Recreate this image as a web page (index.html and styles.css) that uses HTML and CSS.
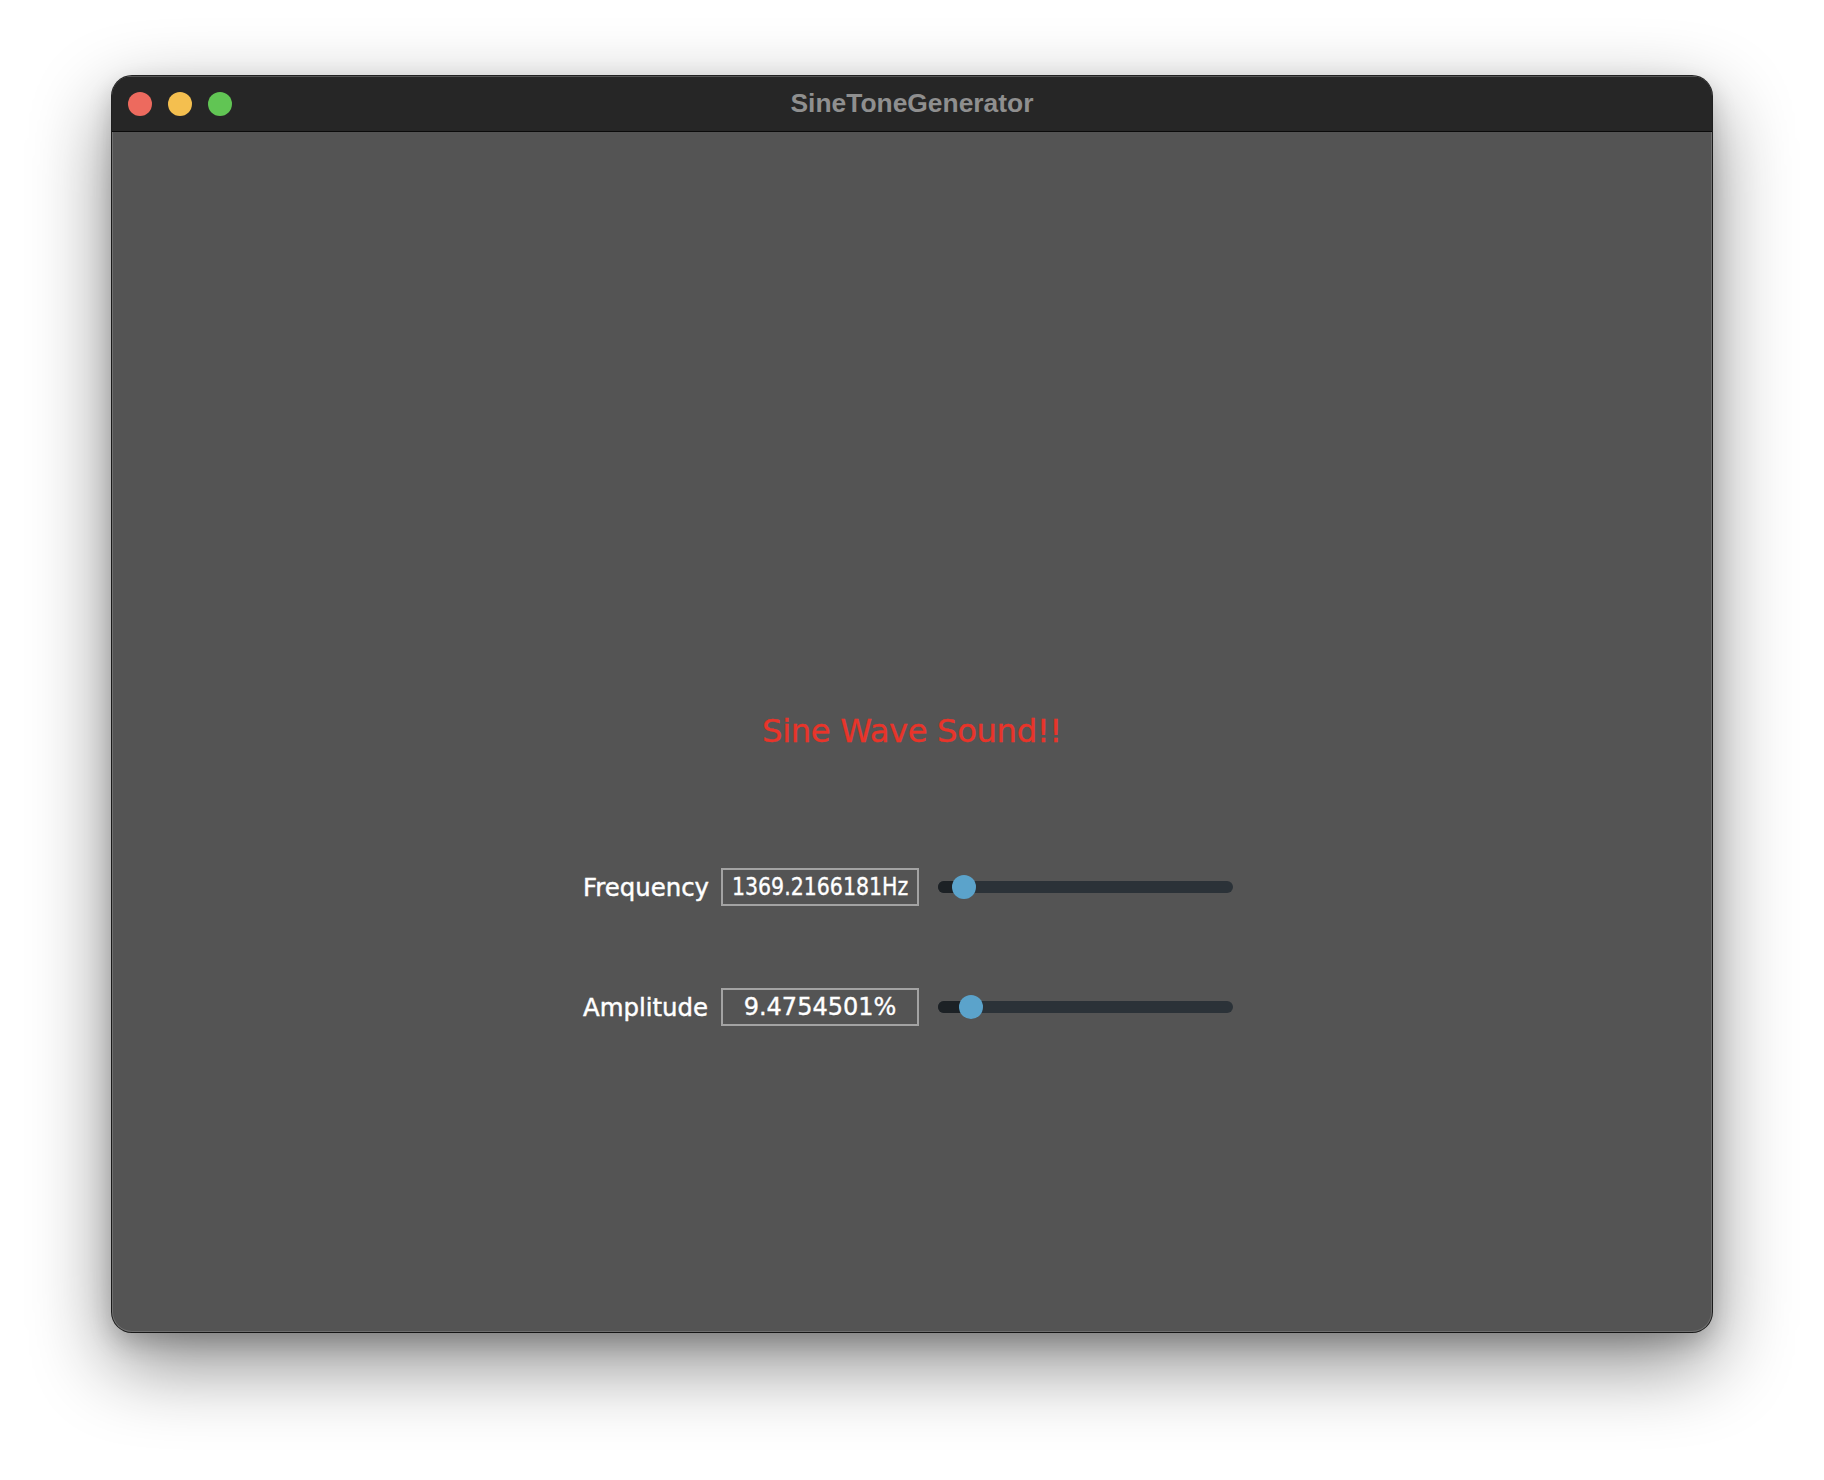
FILE: index.html
```html
<!DOCTYPE html>
<html>
<head>
<meta charset="utf-8">
<title>SineToneGenerator</title>
<link rel="stylesheet" href="styles.css">
</head>
<body>
<div class="window">
  <div class="titlebar">
    <div class="lights">
      <span class="light red"></span>
      <span class="light yellow"></span>
      <span class="light green"></span>
    </div>
    <div class="title">SineToneGenerator</div>
    <div class="spacer"></div>
  </div>
  <div class="content">
    <div class="heading">Sine Wave Sound!!</div>
    <div class="row row-first">
      <div class="label">Frequency</div>
      <div class="valuebox"><span class="value squeeze">1369.2166181Hz</span></div>
      <div class="slider">
        <div class="track-fill" style="width: 26px"></div>
        <div class="thumb"></div>
      </div>
    </div>
    <div class="row row-second">
      <div class="label">Amplitude</div>
      <div class="valuebox"><span class="value">9.4754501%</span></div>
      <div class="slider">
        <div class="track-fill" style="width: 33px"></div>
        <div class="thumb"></div>
      </div>
    </div>
  </div>
</div>
</body>
</html>
```

FILE: styles.css
```css
html, body {
  margin: 0;
  padding: 0;
}
body {
  background: #ffffff;
  width: 1824px;
  height: 1480px;
  overflow: hidden;
  box-sizing: border-box;
  padding: 76px 0 0 112px;
  font-family: "DejaVu Sans", "Noto Sans", sans-serif;
}
.window {
  width: 1600px;
  height: 1256px;
  border-radius: 20px;
  background: #545454;
  overflow: hidden;
  display: flex;
  flex-direction: column;
  box-shadow:
    0 0 0 1px rgba(0, 0, 0, 0.85),
    inset 0 0 0 1px rgba(255, 255, 255, 0.16),
    0 30px 80px rgba(0, 0, 0, 0.48),
    0 10px 24px rgba(0, 0, 0, 0.18);
}
.titlebar {
  height: 55px;
  flex: none;
  background: #262626;
  border-bottom: 1px solid #0b0b0b;
  display: grid;
  grid-template-columns: 1fr auto 1fr;
  align-items: center;
  box-shadow: inset 0 1px 0 rgba(255, 255, 255, 0.22);
}
.lights {
  display: flex;
  gap: 16px;
  padding-left: 16px;
  padding-top: 1px;
}
.light {
  width: 24px;
  height: 24px;
  border-radius: 50%;
  display: block;
}
.red { background: #ed6a5e; }
.yellow { background: #f4bf4f; }
.green { background: #61c554; }
.title {
  font-family: "Liberation Sans", Arial, sans-serif;
  font-weight: bold;
  font-size: 26.4px;
  color: #8f8f8f;
}
.content {
  flex: 1;
  display: flex;
  flex-direction: column;
  padding-top: 579px;
}
.heading {
  text-align: center;
  font-size: 32.3px;
  line-height: 40px;
  letter-spacing: -0.4px;
  color: #e8342a;
  -webkit-text-stroke: 0.3px #e8342a;
}
.row {
  display: flex;
  align-items: center;
  height: 38px;
  padding-left: 471px;
}
.row-first { margin-top: 117px; }
.row-second { margin-top: 82px; }
.label {
  width: 124px;
  text-align: right;
  white-space: nowrap;
  font-size: 24.4px;
  color: #ffffff;
  margin-right: 14px;
  -webkit-text-stroke: 0.45px #ffffff;
}
.valuebox {
  width: 198px;
  height: 38px;
  box-sizing: border-box;
  border: 2px solid #a3a3a3;
  display: flex;
  align-items: center;
  justify-content: center;
  overflow: hidden;
}
.value {
  display: inline-block;
  font-size: 24px;
  color: #ffffff;
  white-space: nowrap;
  -webkit-text-stroke: 0.35px #ffffff;
}
.squeeze {
  transform: scaleX(0.855);
}
.slider {
  margin-left: 19px;
  width: 295px;
  height: 12px;
  border-radius: 6px;
  background: #2b3238;
  display: flex;
  align-items: center;
}
.track-fill {
  height: 12px;
  border-radius: 6px 0 0 6px;
  background: #1c2125;
  flex: none;
}
.thumb {
  width: 24px;
  height: 24px;
  border-radius: 50%;
  background: #5ba3cb;
  flex: none;
  margin-left: -12px;
}
```
